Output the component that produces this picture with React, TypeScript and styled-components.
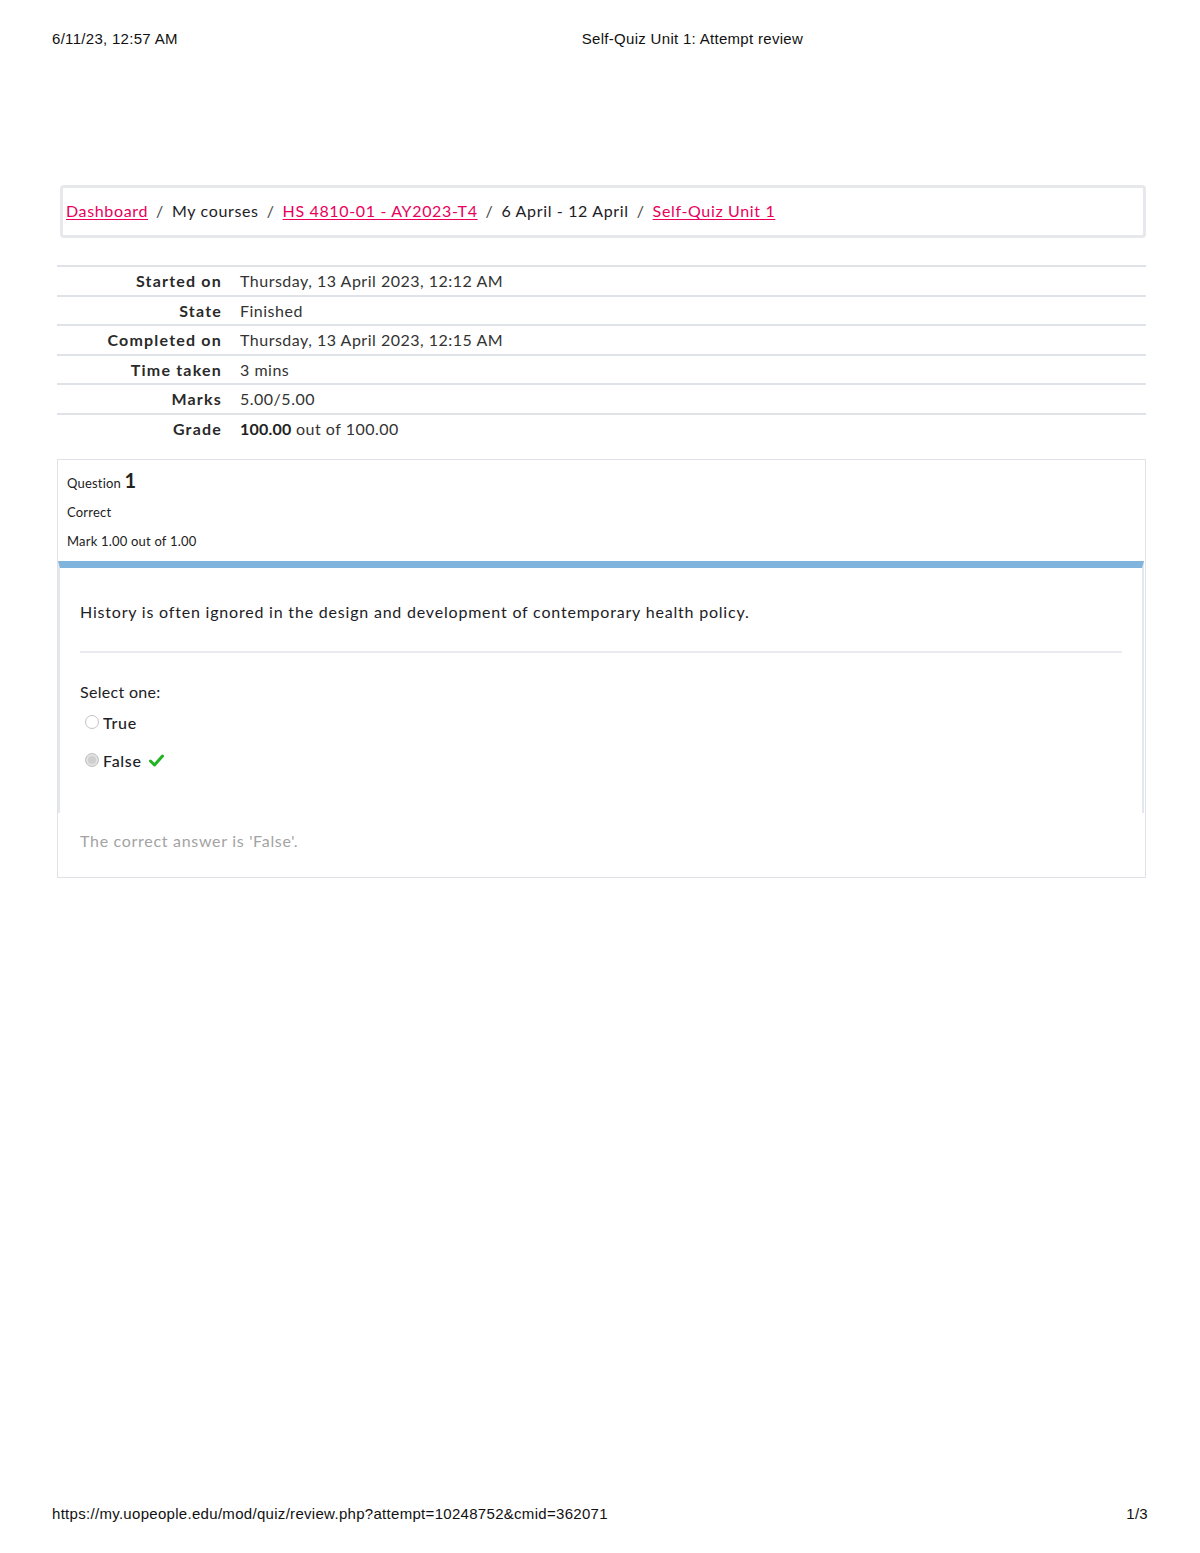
import { createGlobalStyle, styled } from "styled-components"

const GlobalStyle = createGlobalStyle`
body {
    margin: 0;
    background: #fff;
    color: #1d2125;
}
`

const Page = styled.div`
width: 1200px;
height: 1553px;
display: flex;
flex-direction: column;
box-sizing: border-box;
`

const PrintBar = styled.div`
display: flex;
align-items: center;
font-family: "Liberation Sans", Arial, sans-serif;
font-size: 15px;
letter-spacing: 0.3px;
color: #111;
padding: 0 52px;
height: 20px;

&.top {
    margin-top: 28px;
}
&.bottom {
    margin-top: auto;
    margin-bottom: 30px;
    justify-content: space-between;
}
.title {
    margin-left: 404px;
}
`

const Main = styled.main`
padding: 0 54px 0 57px;
margin-top: 137px;
font-family: Lato, "Open Sans", sans-serif;
font-size: 16px;
color: #1d2125;
`

const Breadcrumb = styled.nav`
margin-left: 3px;
height: 53px;
box-sizing: border-box;
border: 3px solid #e6e8ec;
border-radius: 4px;
display: flex;
align-items: center;
gap: 8px;
padding: 0 3px 2px;
letter-spacing: 0.65px;

a {
    color: #e8005c;
    text-decoration: underline;
    text-underline-offset: 2px;
}
span.sep {
    color: #444;
}
`

const Summary = styled.table`
width: 100%;
margin-top: 27px;
border-collapse: collapse;

tr {
    border-top: 2px solid #dfe2e6;
    height: 29.5px;
}
th {
    width: 165px;
    text-align: right;
    font-weight: 700;
    padding: 0 18px 0 0;
    color: #2a2a2a;
    letter-spacing: 1.2px;
}
td {
    padding: 0;
    color: #333;
    letter-spacing: 0.5px;
    b {
        font-weight: 700;
        color: #222;
        letter-spacing: 0.2px;
    }
}
`

const Card = styled.section`
margin-top: 16px;
border: 1px solid #dfe2e6;
`

const Info = styled.div`
padding: 6px 9px 5px;
font-size: 13px;
letter-spacing: 0.2px;
line-height: 29px;
color: #222;

strong {
    font-size: 20px;
    font-weight: 700;
    letter-spacing: 0;
}
`

const Formulation = styled.div`
border-top: 7px solid #80b4dc;
border-left: 2px solid #e4e7eb;
border-right: 2px solid #e4e7eb;
margin-right: 1px;
padding: 34px 20px 25px;

p {
    margin: 0;
    line-height: 20px;
    letter-spacing: 0.8px;
}
hr {
    border: none;
    border-top: 2px solid #e9ebee;
    margin: 29px 0 29px;
}
`

const Prompt = styled.div`
line-height: 20px;
margin-bottom: 10px;
letter-spacing: 0.3px;
`

const Option = styled.label`
display: flex;
align-items: center;
height: 20px;
margin: 0 0 18px 5px;
gap: 4px;
font-weight: 500;
letter-spacing: 0.7px;
`

const Radio = styled.span<{ $checked?: boolean }>`
width: 12px;
height: 12px;
border-radius: 50%;
border: 1px solid #c4c4c4;
background: ${({ $checked }) => ($checked ? "#cfcfcf" : "#fff")};
box-shadow: ${({ $checked }) => ($checked ? "inset 0 0 0 2px #e2e2e2" : "none")};
`

const Outcome = styled.div`
padding: 18px 22px 26px;
color: #a3a3a3;
letter-spacing: 0.7px;
line-height: 20px;
`

function Check() {
    return (
        <svg width="15" height="13" viewBox="0 0 15 13" style={{ marginLeft: 3 }}>
            <path d="M1.5 7 L5.5 11 L13.5 2" fill="none" stroke="#22b322" strokeWidth="3" strokeLinecap="round" strokeLinejoin="round" />
        </svg>
    )
}

export default function App() {
    const rows: [string, React.ReactNode][] = [
        ['Started on', 'Thursday, 13 April 2023, 12:12 AM'],
        ['State', 'Finished'],
        ['Completed on', 'Thursday, 13 April 2023, 12:15 AM'],
        ['Time taken', '3 mins'],
        ['Marks', '5.00/5.00'],
        ['Grade', <><b>100.00</b> out of 100.00</>],
    ]

    return (
        <Page>
            <GlobalStyle />
            <PrintBar className="top">
                <span>6/11/23, 12:57 AM</span>
                <span className="title">Self-Quiz Unit 1: Attempt review</span>
            </PrintBar>
            <Main>
                <Breadcrumb>
                    <a href="/">Dashboard</a>
                    <span className="sep">/</span>
                    <span>My courses</span>
                    <span className="sep">/</span>
                    <a href="/">HS 4810-01 - AY2023-T4</a>
                    <span className="sep">/</span>
                    <span>6 April - 12 April</span>
                    <span className="sep">/</span>
                    <a href="/">Self-Quiz Unit 1</a>
                </Breadcrumb>
                <Summary>
                    <tbody>
                        {rows.map(([k, v], i) => (
                            <tr key={i}>
                                <th>{k}</th>
                                <td>{v}</td>
                            </tr>
                        ))}
                    </tbody>
                </Summary>
                <Card>
                    <Info>
                        <div>Question <strong>1</strong></div>
                        <div>Correct</div>
                        <div>Mark 1.00 out of 1.00</div>
                    </Info>
                    <Formulation>
                        <p>History is often ignored in the design and development of contemporary health policy.</p>
                        <hr />
                        <Prompt>Select one:</Prompt>
                        <Option><Radio />True</Option>
                        <Option><Radio $checked />False<Check /></Option>
                    </Formulation>
                    <Outcome>The correct answer is 'False'.</Outcome>
                </Card>
            </Main>
            <PrintBar className="bottom">
                <span>https://my.uopeople.edu/mod/quiz/review.php?attempt=10248752&amp;cmid=362071</span>
                <span>1/3</span>
            </PrintBar>
        </Page>
    )
}
